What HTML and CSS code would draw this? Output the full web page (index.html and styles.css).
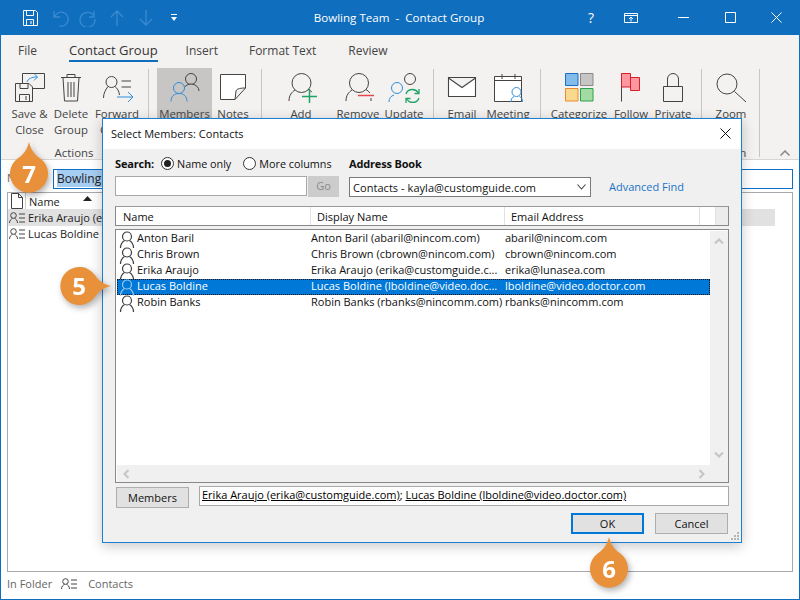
FILE: index.html
```html
<!DOCTYPE html>
<html lang="en">
<head>
<meta charset="utf-8">
<title>Bowling Team - Contact Group</title>
<link rel="stylesheet" href="styles.css">
</head>
<body>
<svg class="sprite" width="0" height="0">
  <symbol id="person" viewBox="0 0 16 18"><circle cx="8" cy="5.500" r="4.500" fill="none" stroke="currentColor" stroke-width="1.200"/><path d="M1.500 17c0-4 2.500-6.500 4-7.500M14.500 17c0-4-2.500-6.500-4-7.500" fill="none" stroke="currentColor" stroke-width="1.200"/></symbol>
  <symbol id="contact" viewBox="0 0 16 12"><circle cx="4.500" cy="3.500" r="2.800" fill="none" stroke="currentColor"/><path d="M.5 11c0-2.500 1.500-4 3-4.500M8.500 11c0-2.500-1.500-4-3-4.500M10 2h6M10 6h6M10 10h6" fill="none" stroke="currentColor"/></symbol>
</svg>
<div class="window">
  <header class="titlebar">
    <div class="qat">
      <svg class="q q-save" width="18" height="18" viewBox="0 0 18 18" fill="none" stroke="#fff"><path d="M2.500 1.500h12l2 2v13h-14zM5.500 1.500v5h7v-5M5.500 16.500v-6h7v6M10 12v3"/></svg>
      <svg class="q q-undo" width="18" height="18" viewBox="0 0 18 18" fill="none" stroke="#3a8ad0" stroke-width="1.300"><path d="M2 2v6h6M2.500 8a7 7 0 1 1 5 9"/></svg>
      <svg class="q q-redo" width="18" height="18" viewBox="0 0 18 18" fill="none" stroke="#3a8ad0" stroke-width="1.300"><path d="M15 2v6h-5M15 7a7.500 7.500 0 1 0 1 3"/></svg>
      <svg class="q q-up" width="14" height="18" viewBox="0 0 14 18" fill="none" stroke="#3a8ad0" stroke-width="1.300"><path d="M7 17V2M1 8l6-6 6 6"/></svg>
      <svg class="q q-down" width="14" height="18" viewBox="0 0 14 18" fill="none" stroke="#3a8ad0" stroke-width="1.300"><path d="M7 1v15M1 10l6 6 6-6"/></svg>
      <svg class="q q-more" width="6" height="7" viewBox="0 0 6 7" fill="#fff"><path d="M0 0h6v1H0zM0 3h6L3 7z"/></svg>
    </div>
    <div class="doc-title">Bowling Team&nbsp; -&nbsp; Contact Group</div>
    <div class="win-ctl">
      <span class="help">?</span>
      <svg class="c-display" width="14" height="10" viewBox="0 0 14 10" fill="none" stroke="#fff"><path d="M.5.500h13v9H.5zM.5 2.500h13M7 8.500V4M5 6l2-2 2 2"/></svg>
      <svg class="c-min" width="11" height="11" viewBox="0 0 11 11" stroke="#fff"><path d="M0 5.500h11"/></svg>
      <svg class="c-max" width="11" height="11" viewBox="0 0 11 11" fill="none" stroke="#fff"><path d="M.5.500h10v10H.5z"/></svg>
      <svg class="c-close" width="11" height="11" viewBox="0 0 11 11" fill="none" stroke="#fff"><path d="M.5.500l10 10M10.500.500l-10 10"/></svg>
    </div>
  </header>

  <nav class="tabs">
    <span class="tab tab-file">File</span>
    <span class="tab tab-active">Contact Group</span>
    <span class="tab tab-insert">Insert</span>
    <span class="tab tab-format">Format Text</span>
    <span class="tab tab-review">Review</span>
  </nav>

  <section class="ribbon">
    <div class="group g-actions">
      <div class="items">
        <div class="item w43">
          <svg width="32" height="32" viewBox="0 0 32 32" fill="none" stroke="#444"><path d="M8.500 12V2.500h22v15H19"/><path d="M1.500 12.500H15l3.500 3.500v14.500H1.500zM6 12.500v5h8v-5M5.500 30.500v-7h10v7M12 25v4"/><path d="M13 11c1-3 4-5 10-5M20 2.500L23.500 6 20 9.500" stroke="#2e8fdb"/></svg>
          <span class="lbl">Save &amp;<br>Close</span>
        </div>
        <div class="item w40">
          <svg width="22" height="32" viewBox="0 0 22 32" fill="none" stroke="#444"><path d="M1 6.500h20M7 6V3.500h8V6M3 6.500L4.500 30h13L19 6.500M8 11v15M11 11v15M14 11v15"/></svg>
          <span class="lbl">Delete<br>Group</span>
        </div>
        <div class="item w52">
          <svg width="32" height="32" viewBox="0 0 32 32" fill="none" stroke="#444"><circle cx="10.500" cy="11" r="5.500"/><path d="M2.500 27c0-5 2-8 4.500-11.500M18.500 24c-.5-4-2-6.500-4.500-8.500M20.500 10H30M20.500 16H30"/><path d="M16 26h15.500M27 21l5 5-5 5" stroke="#2e8fdb"/></svg>
          <span class="lbl">Forward<br>Group</span>
        </div>
      </div>
      <span class="glabel">Actions</span>
    </div>
    <i class="sep"></i>
    <div class="group g-show">
      <div class="items">
        <div class="item w55 on">
          <svg width="32" height="32" viewBox="0 0 32 32" fill="none"><circle cx="22" cy="8" r="5.500" stroke="#444"/><path d="M14 20a8 7 0 0 1 16 0" stroke="#444" fill="#c8c6c4"/><circle cx="10" cy="17" r="5.500" stroke="#2e8fdb" fill="#c8c6c4"/><path d="M2 30.500c0-5 3-8 8-8s8 3 8 8" stroke="#2e8fdb" fill="#c8c6c4"/></svg>
          <span class="lbl">Members</span>
        </div>
        <div class="item w42">
          <svg width="28" height="32" viewBox="0 0 28 32" fill="#fff" stroke="#444"><path d="M1.500 3.500h25V17L16 28.500H1.500zM26.500 17c-4 0-9 .5-9.500 3l-1 8.500"/></svg>
          <span class="lbl">Notes</span>
        </div>
      </div>
    </div>
    <i class="sep s2"></i>
    <div class="group g-names">
      <div class="items">
        <div class="item w60">
          <svg width="32" height="32" viewBox="0 0 32 32" fill="none" stroke="#444"><circle cx="16.500" cy="12" r="9.500"/><path d="M4 30c0-6 3-9 6-11M27 21c-1-.8-2-1.500-4-2.500"/><path d="M24.500 18v15M17 25.500h15" stroke="#21a366" stroke-width="1.500"/></svg>
          <span class="lbl">Add</span>
        </div>
        <div class="item w54">
          <svg width="32" height="32" viewBox="0 0 32 32" fill="none" stroke="#444"><circle cx="17" cy="12" r="9.500"/><path d="M4 30c0-6 3-9 6-11M28 22c-1-1.500-2.500-2.500-4-3.500M29 27v3"/><path d="M16 24.500h16" stroke="#e8474c" stroke-width="1.500"/></svg>
          <span class="lbl">Remove</span>
        </div>
        <div class="item w38">
          <svg width="32" height="32" viewBox="0 0 32 32" fill="none"><circle cx="22" cy="8" r="5.500" stroke="#444"/><circle cx="9" cy="17" r="5.500" stroke="#2e8fdb"/><path d="M1 31c0-4 2-6 5-7M16 24" stroke="#2e8fdb"/><path d="M18 23c1-3 3.500-4.500 6.500-4.500 2.500 0 4.500 1.500 5.500 3M31 18v4.500h-4.500M31 27c-1 3-3.500 4.500-6.500 4.500-2.500 0-4.500-1.500-5.500-3M18 32v-4.500h4.500" stroke="#21a366" stroke-width="1.300"/></svg>
          <span class="lbl">Update</span>
        </div>
      </div>
    </div>
    <i class="sep s3"></i>
    <div class="group g-comm">
      <div class="items">
        <div class="item w44">
          <svg width="30" height="32" viewBox="0 0 30 32" fill="#fff" stroke="#444"><path d="M1.500 6.500h27v19h-27zM1.500 7L15 16.500 28.500 7" stroke-width="1.100"/></svg>
          <span class="lbl">Email</span>
        </div>
        <div class="item w48">
          <svg width="30" height="32" viewBox="0 0 30 32" fill="#fff" stroke="#444"><path d="M1.500 5.500h27v25h-27zM1.500 9.500h27M9 3v5M22 3v5"/><circle cx="23.500" cy="21" r="4.500" stroke="#2e8fdb"/><path d="M18 31c0-3 1-4.500 3-5.500M29.500 31c0-3-1-4.500-3-5.500" stroke="#2e8fdb" fill="none"/></svg>
          <span class="lbl">Meeting</span>
        </div>
      </div>
    </div>
    <i class="sep s4"></i>
    <div class="group g-tags">
      <div class="items">
        <div class="item w64">
          <svg width="30" height="32" viewBox="0 0 30 32"><path d="M1.500 2.500H14v12H1.500z" fill="#83bcea" stroke="#1a6fc0"/><path d="M16.500 2.500H29v12H16.500z" fill="#c8c6c4" stroke="#8a8886"/><path d="M1.500 17.500H14V30H1.500z" fill="#f8d98e" stroke="#ed8a2e"/><path d="M16.500 17.500H29V30H16.500z" fill="#a3dca3" stroke="#2e9e4f"/></svg>
          <span class="lbl">Categorize</span>
        </div>
        <div class="item w40">
          <svg width="22" height="32" viewBox="0 0 22 32"><path d="M1.500 2.500v28" stroke="#444" fill="none"/><path d="M1.500 2.500h9V16h-9z" fill="#ff97a0" stroke="#d81f2a"/><path d="M10.500 6.500h9v13h-9z" fill="#ff97a0" stroke="#d81f2a"/></svg>
          <span class="lbl">Follow</span>
        </div>
        <div class="item w44">
          <svg width="22" height="32" viewBox="0 0 22 32" fill="none" stroke="#444"><path d="M1.500 15.500h19v15h-19zM5.500 15.500V8a5.500 5.500 0 0 1 11 0v7.500"/></svg>
          <span class="lbl">Private</span>
        </div>
      </div>
    </div>
    <i class="sep s5"></i>
    <div class="group g-zoom">
      <div class="items">
        <div class="item w50">
          <svg width="32" height="32" viewBox="0 0 32 32" fill="none" stroke="#444"><circle cx="12" cy="13" r="10"/><path d="M19.500 20.500L31 31"/></svg>
          <span class="lbl">Zoom</span>
        </div>
      </div>
      <span class="glabel gl-zoom">Zoom</span>
    </div>
    <i class="sep s6"></i>
    <svg class="collapse" width="10" height="6" viewBox="0 0 10 6" fill="none" stroke="#888" stroke-width="1.500"><path d="M.5 5.500L5 1l4.500 4.500"/></svg>
  </section>

  <main class="content">
    <div class="name-row">
      <span class="muted nm-label">Name</span>
      <div class="nm-field"><span class="sel-text">Bowling Team</span></div>
    </div>
    <div class="members">
      <div class="m-head">
        <svg width="12" height="16" viewBox="0 0 12 16" fill="#fff" stroke="#444"><path d="M.5.500h7l4 4v11H.5zM7.500.500v4h4"/></svg>
        <i class="m-sep"></i>
        <span class="m-col">Name</span>
        <svg class="m-arrow" width="9" height="5" viewBox="0 0 9 5" fill="#222"><path d="M4.500 0L9 5H0z"/></svg>
      </div>
      <div class="m-row m-hot"><svg class="ci" width="16" height="12"><use href="#contact"/></svg><span>Erika Araujo (erika@customguide.com)</span></div>
      <div class="m-row"><svg class="ci" width="16" height="12"><use href="#contact"/></svg><span>Lucas Boldine (lboldine@video.doctor.com)</span></div>
    </div>
    <footer class="status">
      <span>In Folder</span>
      <svg class="ci st-i" width="16" height="12"><use href="#contact"/></svg>
      <span>Contacts</span>
    </footer>
  </main>

  <section class="dialog">
    <div class="d-title"><span>Select Members: Contacts</span>
      <svg width="11" height="11" viewBox="0 0 11 11" fill="none" stroke="#111"><path d="M.5.500l10 10M10.500.500l-10 10"/></svg>
    </div>
    <div class="d-body">
      <div class="d-search">
        <div class="s-labels">
          <b class="s-bold">Search:</b>
          <span class="radio checked"></span><span class="r-txt">Name only</span>
          <span class="radio r2"></span><span class="r-txt">More columns</span>
        </div>
        <b class="s-bold s-ab">Address Book</b>
      </div>
      <div class="d-controls">
        <div class="input"></div>
        <div class="go">Go</div>
        <div class="select"><span>Contacts - kayla@customguide.com</span>
          <svg width="9" height="6" viewBox="0 0 9 6" fill="none" stroke="#444" stroke-width="1.100"><path d="M.5.500l4 4.500 4-4.500"/></svg>
        </div>
        <span class="adv">Advanced Find</span>
      </div>
      <div class="l-head">
        <span class="h1">Name</span><span class="h2">Display Name</span><span class="h3">Email Address</span><span class="h4"></span><span class="h5"></span>
      </div>
      <div class="list">
        <div class="l-main">
          <div class="rows">
            <div class="row"><svg class="pi" width="16" height="18"><use href="#person"/></svg><span class="c1">Anton Baril</span><span class="c2">Anton Baril (abaril@nincom.com)</span><span class="c3">abaril@nincom.com</span></div>
            <div class="row"><svg class="pi" width="16" height="18"><use href="#person"/></svg><span class="c1">Chris Brown</span><span class="c2">Chris Brown (cbrown@nincom.com)</span><span class="c3">cbrown@nincom.com</span></div>
            <div class="row"><svg class="pi" width="16" height="18"><use href="#person"/></svg><span class="c1">Erika Araujo</span><span class="c2">Erika Araujo (erika@customguide.c...</span><span class="c3">erika@lunasea.com</span></div>
            <div class="row picked"><svg class="pi" width="16" height="18"><use href="#person"/></svg><span class="c1">Lucas Boldine</span><span class="c2">Lucas Boldine (lboldine@video.doc...</span><span class="c3">lboldine@video.doctor.com</span></div>
            <div class="row"><svg class="pi" width="16" height="18"><use href="#person"/></svg><span class="c1">Robin Banks</span><span class="c2">Robin Banks (rbanks@nincomm.com)</span><span class="c3">rbanks@nincomm.com</span></div>
          </div>
          <div class="vbar">
            <svg width="10" height="6" viewBox="0 0 10 6" fill="none" stroke="#c4c4c4" stroke-width="2"><path d="M1 5.500L5 1.500l4 4"/></svg>
            <svg width="10" height="6" viewBox="0 0 10 6" fill="none" stroke="#c4c4c4" stroke-width="2"><path d="M1 .5L5 4.500l4-4"/></svg>
          </div>
        </div>
        <div class="hbar">
          <svg width="6" height="10" viewBox="0 0 6 10" fill="none" stroke="#c4c4c4" stroke-width="2"><path d="M5.500 1L1.500 5l4 4"/></svg>
          <svg width="6" height="10" viewBox="0 0 6 10" fill="none" stroke="#c4c4c4" stroke-width="2"><path d="M.5 1l4 4-4 4"/></svg>
        </div>
      </div>
      <div class="d-members">
        <div class="btn btn-members">Members</div>
        <div class="m-field"><u>Erika Araujo (erika@customguide.com)</u>; <u>Lucas Boldine (lboldine@video.doctor.com)</u></div>
      </div>
      <div class="d-actions">
        <div class="btn btn-ok">OK</div>
        <div class="btn">Cancel</div>
      </div>
      <svg class="grip" width="9" height="9" viewBox="0 0 9 9" fill="#b5b5b5"><path d="M6 0h2v2H6zM3 3h2v2H3zM6 3h2v2H6zM0 6h2v2H0zM3 6h2v2H3zM6 6h2v2H6z"/></svg>
    </div>
  </section>

  <div class="callout co-7"><svg width="60" height="70" viewBox="0 0 60 70"><path d="M30 2c2 8 5 12 11 16.200a19 19 0 1 1-22 0c6-4.200 9-8.200 11-16.200z" fill="#e9903a"/></svg><span>7</span></div>
  <div class="callout co-6"><svg width="60" height="70" viewBox="0 0 60 70"><path d="M30 2c2 8 5 12 11 16.200a19 19 0 1 1-22 0c6-4.200 9-8.200 11-16.200z" fill="#e9903a"/></svg><span>6</span></div>
  <div class="callout co-5"><svg width="70" height="60" viewBox="0 0 70 60"><path d="M68 30c-8 2-12 5-16.200 11a19 19 0 1 1 0-22c4.200 6 8.200 9 16.200 11z" fill="#e9903a"/></svg><span>5</span></div>
</div>
</body>
</html>
```
FILE: styles.css
```css
* { box-sizing: border-box; }
html, body { margin: 0; padding: 0; }
body { width: 800px; height: 600px; overflow: hidden; font-family: "Open Sans", "Noto Sans", sans-serif; font-size: 11px; color: #222; }
.sprite { position: absolute; }

.window { position: relative; width: 800px; height: 600px; display: flex; flex-direction: column; border: 1px solid #106ebe; border-top: 0; background: #fff; overflow: hidden; }

/* title bar */
.titlebar { height: 35px; margin: 0 -1px; background: #106ebe; color: #fff; display: flex; align-items: center; position: relative; flex: none; }
.qat { display: flex; align-items: center; padding-left: 21px; }
.q-undo { margin-left: 13px; }
.q-redo { margin-left: 9px; }
.q-up { margin-left: 13px; }
.q-down { margin-left: 15px; }
.q-more { margin-left: 18px; }
.doc-title { position: absolute; left: 0; right: 0; text-align: center; font-size: 11.600px; padding-right: 2px; }
.win-ctl { margin-left: auto; display: flex; align-items: center; position: relative; }
.help { font-size: 14px; margin-right: 30px; }
.c-display { margin-right: 40px; }
.c-min { margin-right: 36px; }
.c-max { margin-right: 35px; }
.c-close { margin-right: 18px; }

/* tabs */
.tabs { height: 27px; background: #f3f2f1; display: flex; flex: none; padding-left: 17px; font-size: 12px; color: #444; }
.tab { line-height: 31px; height: 27px; }
.tab-active { margin-left: 32px; color: #333; font-size: 13px; border-bottom: 2px solid #106ebe; }
.tab-insert { margin-left: 28px; }
.tab-format { margin-left: 31px; }
.tab-review { margin-left: 32px; }

/* ribbon */
.ribbon { height: 98px; background: #f3f2f1; border-bottom: 1px solid #d8d6d4; display: flex; flex: none; padding: 6px 0 0 7px; font-size: 11.400px; color: #444; }
.group { display: flex; flex-direction: column; }
.items { display: flex; height: 78px; }
.item { display: flex; flex-direction: column; align-items: center; text-align: center; line-height: 16px; padding-top: 3px; height: 78px; }
.item svg { height: 32px; flex: none; margin-bottom: 3px; }
.item.on { background: #c8c6c4; }
.w38 { width: 38px; } .w40 { width: 40px; } .w42 { width: 42px; } .w43 { width: 43px; } .w44 { width: 44px; } .w48 { width: 48px; } .w50 { width: 50px; } .w52 { width: 52px; } .w54 { width: 54px; } .w55 { width: 55px; } .w60 { width: 60px; } .w64 { width: 64px; }
.glabel { text-align: center; padding-right: 3px; line-height: 14px; }
.gl-zoom { padding-right: 0; }
.sep { display: block; width: 1px; height: 88px; margin: 1px 8px 0 5px; background: #c8c6c4; }
.s2 { margin-left: 7px; margin-right: 9px; }
.s3 { margin-left: 10px; margin-right: 6px; }
.s4 { margin-left: 8px; margin-right: 6px; }
.s5 { margin-left: 6px; margin-right: 4px; }
.s6 { margin-left: 3px; margin-right: 20px; }
.collapse { margin-top: 82px; }

/* content */
.content { flex: 1; display: flex; flex-direction: column; padding: 9px 6px 0; min-height: 0; }
.name-row { display: flex; height: 20px; flex: none; }
.muted { color: #666; }
.nm-label { width: 46px; line-height: 18px; }
.nm-field { flex: 1; border: 1px solid #0f6fc6; padding: 2px 3px; line-height: 13px; font-size: 12px; }
.sel-text { background: #a6cdf2; }
.members { flex: 1; margin-top: 3px; border: 1px solid #a8a8ae; min-height: 0; padding-right: 17px; }
.m-head { height: 16px; display: flex; align-items: center; padding-left: 3px; }
.m-sep { width: 1px; height: 16px; background: #ccc; margin: 0 3px 0 2px; }
.m-col { width: 54px; }
.m-row { height: 16px; display: flex; align-items: center; line-height: 16px; padding-left: 1px; white-space: nowrap; }
.m-row .ci { margin-right: 3px; }
.m-arrow { margin-top: -5px; }
.m-hot { background: #e1e1e1; height: 17px; }
.ci { color: #444; flex: none; }
.status { height: 27px; flex: none; display: flex; align-items: center; color: #666; padding-bottom: 4px; }
.st-i { margin: 0 11px 0 9px; }

/* dialog */
.dialog { position: absolute; left: 101px; top: 118px; width: 640px; height: 425px; border: 1px solid #1b7fd4; background: #f0f0f0; box-shadow: 0 3px 12px rgba(0,0,0,.22); display: flex; flex-direction: column; color: #111; }
.d-title { height: 30px; background: #fff; display: flex; align-items: center; justify-content: space-between; padding: 0 10px 2px 8px; flex: none; }
.d-body { flex: 1; position: relative; padding: 0 12px; display: flex; flex-direction: column; }
.d-search { display: flex; height: 27px; align-items: center; padding-top: 2px; }
.s-labels { width: 234px; display: flex; align-items: center; }
.s-bold { font-weight: 700; letter-spacing: -.17px; }
.s-labels .s-bold { margin-right: 7px; }
.r-txt { font-size: 10.800px; }
.radio { width: 13px; height: 13px; border-radius: 50%; border: 1px solid #333; background: #fff; margin-right: 3px; position: relative; flex: none; }
.checked::after { content: ""; position: absolute; left: 2px; top: 2px; width: 7px; height: 7px; background: #222; border-radius: 50%; }
.r2 { margin-left: 12px; }
.d-controls { display: flex; height: 21px; align-items: flex-start; }
.input { width: 192px; height: 20px; border: 1px solid #a8a8a8; background: #fff; }
.go { width: 31px; height: 21px; margin-left: 1px; background: #ccc; color: #8a8a8a; text-align: center; line-height: 20px; }
.select { width: 242px; height: 20px; margin-left: 10px; border: 1px solid #7a7a7a; background: #fff; display: flex; align-items: center; justify-content: space-between; padding: 0 4px 0 3px; margin-top: 1px; letter-spacing: .05px; }
.adv { margin-left: 18px; color: #1a73c9; line-height: 21px; }
.l-head { display: flex; height: 20px; margin-top: 9px; width: 614px; border: 1px solid #888; border-top-color: #999; background: #fff; line-height: 19px; }
.l-head span { height: 100%; border-right: 1px solid #e2e2e2; padding-left: 7px; flex: none; }
.h1 { width: 195px; } .h2 { width: 194px; padding-left: 6px !important; } .h3 { width: 195px; padding-left: 6px !important; } .h4 { width: 16px; }
.l-head .h5 { width: 12px; background: #ececec; border: 0; }
.list { margin-top: 3px; width: 614px; height: 254px; border: 1px solid #888; background: #fff; padding: 1px 0 0 1px; display: flex; flex-direction: column; }
.l-main { flex: 1; display: flex; min-height: 0; }
.rows { flex: 1; }
.row { height: 16px; display: flex; align-items: flex-start; position: relative; white-space: nowrap; }
.pi { flex: none; margin: 0 2px; color: #3f3f3f; position: relative; }
.c1 { width: 174px; flex: none; }
.c2 { width: 194px; flex: none; overflow: hidden; height: 14px; }
.c1, .c2, .c3 { line-height: 14px; }
.c3 { flex: none; }
.picked { background: #0078d7; color: #fff; outline: 1px dotted #111; outline-offset: -1px; }
.picked .pi { color: #9cc9ee; }
.vbar { width: 18px; background: #f0f0f0; display: flex; flex-direction: column; justify-content: space-between; align-items: center; padding: 7px 0; flex: none; }
.hbar { height: 17px; background: #f0f0f0; display: flex; justify-content: space-between; align-items: center; padding: 0 23px 0 6px; flex: none; }
.d-members { display: flex; margin-top: 3px; height: 22px; padding-left: 1px; }
.btn { width: 73px; height: 21px; border: 1px solid #adadad; background: #e1e1e1; text-align: center; line-height: 19px; }
.btn-members { margin-top: 1px; }
.m-field { width: 530px; height: 20px; margin-left: 10px; border: 1px solid #a8a8a8; background: #fff; padding-left: 2px; line-height: 16px; white-space: nowrap; color: #000; }
.d-actions { display: flex; justify-content: flex-end; gap: 11px; margin-top: 5px; width: 613px; }
.btn-ok { border: 2px solid #0078d7; line-height: 17px; }
.grip { position: absolute; right: 1px; bottom: 1px; }

/* callouts */
.callout { position: absolute; filter: drop-shadow(2px 3px 3px rgba(0,0,0,.3)); color: #fff; font: 700 24px/1 "Open Sans", sans-serif; }
.callout svg { display: block; }
.callout span { position: absolute; width: 40px; text-align: center; }
.co-7 { left: -2px; top: 140px; }
.co-7 span, .co-6 span { left: 10px; top: 22px; }
.co-6 { left: 578px; top: 535px; }
.co-5 { left: 42px; top: 256px; }
.co-5 span { left: 16px; top: 18px; }
```
